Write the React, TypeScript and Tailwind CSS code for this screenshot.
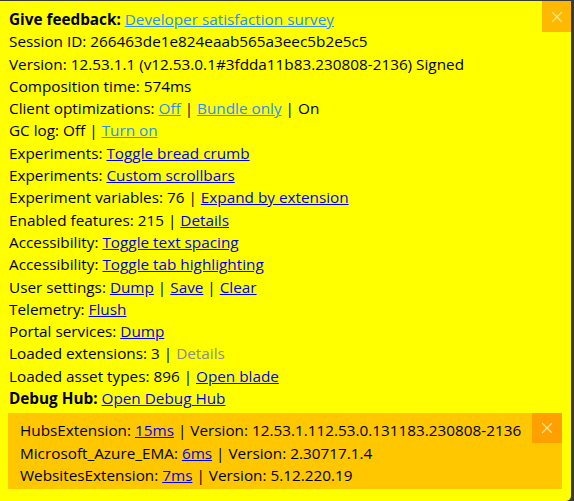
import { X } from "lucide-react";

const link = "text-[#0000ee] underline";
const softLink = "text-[#2b8ff5] underline";

function Sep() {
  return <span> | </span>;
}

interface Ext {
  name: string;
  ms: string;
  version: string;
}

const extensions: Ext[] = [
  { name: "HubsExtension", ms: "15ms", version: "12.53.1.112.53.0.131183.230808-2136" },
  { name: "Microsoft_Azure_EMA", ms: "6ms", version: "2.30717.1.4" },
  { name: "WebsitesExtension", ms: "7ms", version: "5.12.220.19" },
];

export default function App() {
  return (
    <div className="w-[574px] h-[501px] bg-[#3a3a3a] overflow-hidden">
      <div
        className="relative w-[571px] h-[500px] mt-px bg-[#ffff00] rounded-br-[5px] text-black text-[15.3px] leading-[22.3px] pt-[7px] pl-[9px] whitespace-nowrap"
        style={{ fontFamily: '"Open Sans", "Noto Sans", sans-serif' }}
      >
        <button className="absolute top-0 right-0 w-[29px] h-[31px] bg-[#ffb800] flex items-center justify-center">
          <X className="w-[18px] h-[18px] text-[#ffe98a]" strokeWidth={1.75} />
        </button>

        <div>
          <b>Give feedback:</b> <a className={softLink}>Developer satisfaction survey</a>
        </div>
        <div>Session ID: 266463de1e824eaab565a3eec5b2e5c5</div>
        <div>Version: 12.53.1.1 (v12.53.0.1#3fdda11b83.230808-2136) Signed</div>
        <div>Composition time: 574ms</div>
        <div>
          Client optimizations: <a className={softLink}>Off</a>
          <Sep />
          <a className={softLink}>Bundle only</a>
          <Sep />
          On
        </div>
        <div>
          GC log: Off
          <Sep />
          <a className={softLink}>Turn on</a>
        </div>
        <div>
          Experiments: <a className={link}>Toggle bread crumb</a>
        </div>
        <div>
          Experiments: <a className={link}>Custom scrollbars</a>
        </div>
        <div>
          Experiment variables: 76
          <Sep />
          <a className={link}>Expand by extension</a>
        </div>
        <div>
          Enabled features: 215
          <Sep />
          <a className={link}>Details</a>
        </div>
        <div>
          Accessibility: <a className={link}>Toggle text spacing</a>
        </div>
        <div>
          Accessibility: <a className={link}>Toggle tab highlighting</a>
        </div>
        <div>
          User settings: <a className={link}>Dump</a>
          <Sep />
          <a className={link}>Save</a>
          <Sep />
          <a className={link}>Clear</a>
        </div>
        <div>
          Telemetry: <a className={link}>Flush</a>
        </div>
        <div>
          Portal services: <a className={link}>Dump</a>
        </div>
        <div>
          Loaded extensions: 3
          <Sep />
          <span className="text-[#8a8a8a]">Details</span>
        </div>
        <div>
          Loaded asset types: 896
          <Sep />
          <a className={link}>Open blade</a>
        </div>
        <div>
          <b>Debug Hub:</b> <a className={link}>Open Debug Hub</a>
        </div>

        {/* Extensions panel */}
        <div className="relative mt-[4px] w-[554px] h-[76px] -ml-px bg-[#ffc700] pt-[6px] pl-[12px] overflow-hidden">
          <button className="absolute top-0 right-0 w-[30px] h-[30px] bg-[#ff9f00] flex items-center justify-center">
            <X className="w-[18px] h-[18px] text-[#ffe98a]" strokeWidth={1.75} />
          </button>
          {extensions.map((e) => (
            <div key={e.name}>
              {e.name}: <a className={link}>{e.ms}</a>
              <Sep />
              Version: {e.version}
            </div>
          ))}
        </div>
      </div>
    </div>
  );
}
